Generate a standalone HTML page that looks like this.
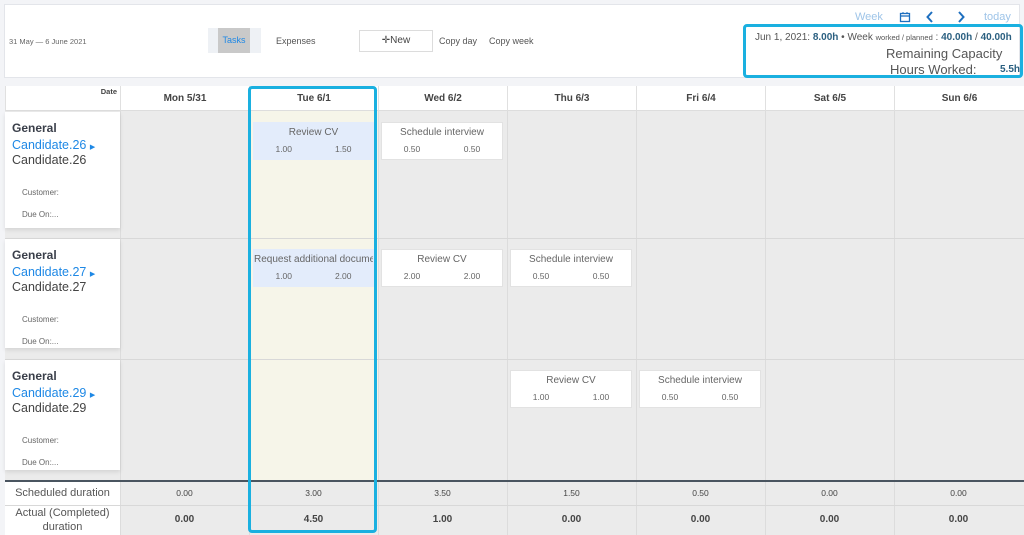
<!DOCTYPE html>
<html><head><meta charset="utf-8"><style>
*{box-sizing:border-box;margin:0;padding:0}
body{width:1024px;height:535px;overflow:hidden;background:#f3f4f7;font-family:"Liberation Sans",sans-serif;position:relative;color:#555}
.a{position:absolute}
.top{left:4px;top:4px;width:1016px;height:74px;background:#fff;border:1px solid #e3e5ea}
.grid{left:5px;top:86px;width:1019px;height:449px;background:#ebebeb}
.hd{top:86px;height:25px;background:#fff;border-left:1px solid #e0e0e0;border-bottom:1px solid #ddd;font-size:10px;font-weight:bold;color:#444;text-align:center;line-height:25px}
.col{border-left:1px solid #dcdcdc}
.hl{border-top:1px solid #d8d8d8}
.card{left:5px;width:115px;background:#fff;box-shadow:0 2px 4px rgba(0,0,0,.10);padding:9px 7px}
.card b{display:block;font-size:12px;color:#3a3f4a}
.card .c{font-size:12.5px;color:#1e88e5;margin-top:3px}
.card .d{font-size:12.5px;color:#444;margin-top:1px}
.card .s{font-size:8px;color:#666;margin-left:10px}
.t{background:#fff;border:1px solid #e2e2e2;font-size:10px;color:#666;text-align:center;padding-top:4px;white-space:nowrap;overflow:hidden}
.t .n{display:flex;justify-content:space-around;font-size:8.5px;margin-top:6px}
.blue{background:#e3ecfb;border-color:#e3ecfb}
.sum{font-size:8.5px;color:#444;text-align:center;width:129px}
</style></head><body>
<div class="a top"></div>
<div class="a" style="left:9px;top:37px;font-size:7.5px;color:#666">31 May — 6 June 2021</div>
<div class="a" style="left:208px;top:28px;width:53px;height:25px;background:#eef1f5"></div>
<div class="a" style="left:218px;top:28px;width:32px;height:25px;background:#c9c9c9;color:#1e88e5;font-size:9px;text-align:center;line-height:25px">Tasks</div>
<div class="a" style="left:276px;top:36px;font-size:9px;color:#555">Expenses</div>
<div class="a" style="left:359px;top:30px;width:74px;height:22px;border:1px solid #dcdcdc;background:#fff;font-size:10px;color:#444;text-align:center;line-height:20px">✛New</div>
<div class="a" style="left:439px;top:36px;font-size:9px;color:#555">Copy day</div>
<div class="a" style="left:489px;top:36px;font-size:9px;color:#555">Copy week</div>
<div class="a" style="left:855px;top:11px;font-size:11px;color:#9ec4e8">Week</div>
<svg class="a" style="left:899px;top:11px" width="12" height="12" viewBox="0 0 12 12"><rect x="1.5" y="2.5" width="9" height="8" fill="none" stroke="#1e6fbf" stroke-width="1.3"/><line x1="1.5" y1="5" x2="10.5" y2="5" stroke="#1e6fbf" stroke-width="1.3"/><line x1="4" y1="1" x2="4" y2="3" stroke="#1e6fbf"/><line x1="8" y1="1" x2="8" y2="3" stroke="#1e6fbf"/></svg>
<svg class="a" style="left:925px;top:11px" width="10" height="12"><path d="M7 1 L2.5 6 L7 11" fill="none" stroke="#1e6fbf" stroke-width="2"/></svg>
<svg class="a" style="left:956px;top:11px" width="10" height="12"><path d="M3 1 L7.5 6 L3 11" fill="none" stroke="#1e6fbf" stroke-width="2"/></svg>
<div class="a" style="left:984px;top:11px;font-size:11px;color:#9ec4e8">today</div>
<div class="a" style="left:755px;top:32px;font-size:10px;color:#555;white-space:nowrap">Jun 1, 2021: <b style="color:#2a5f80">8.00h</b> • Week <span style="font-size:7.5px">worked / planned</span> : <b style="color:#2a5f80">40.00h</b> / <b style="color:#2a5f80">40.00h</b></div>
<div class="a" style="left:886px;top:46px;font-size:13px;color:#555">Remaining Capacity</div>
<div class="a" style="left:890px;top:62px;font-size:13px;color:#555">Hours Worked:</div>
<div class="a" style="left:1000px;top:64px;font-size:10px;font-weight:bold;color:#2a5f80">5.5h</div>
<div class="a" style="left:743px;top:24px;width:280px;height:54px;border:3px solid #1ab0e0;border-radius:4px"></div>

<div class="a grid"></div>
<div class="a" style="left:249px;top:111px;width:129px;height:369px;background:#f6f5e9"></div>
<div class="a hd" style="left:5px;width:115px;text-align:right;padding-right:3px;line-height:12px;font-size:7.5px">Date</div>
<div class="a hd" style="left:120px;width:129px">Mon 5/31</div>
<div class="a hd" style="left:249px;width:129px">Tue 6/1</div>
<div class="a hd" style="left:378px;width:129px">Wed 6/2</div>
<div class="a hd" style="left:507px;width:129px">Thu 6/3</div>
<div class="a hd" style="left:636px;width:129px">Fri 6/4</div>
<div class="a hd" style="left:765px;width:129px">Sat 6/5</div>
<div class="a hd" style="left:894px;width:130px">Sun 6/6</div>
<div class="a col" style="left:120px;top:111px;height:424px"></div>
<div class="a col" style="left:249px;top:111px;height:424px"></div>
<div class="a col" style="left:378px;top:111px;height:424px"></div>
<div class="a col" style="left:507px;top:111px;height:424px"></div>
<div class="a col" style="left:636px;top:111px;height:424px"></div>
<div class="a col" style="left:765px;top:111px;height:424px"></div>
<div class="a col" style="left:894px;top:111px;height:424px"></div>
<div class="a hl" style="left:5px;top:238px;width:1019px"></div>
<div class="a hl" style="left:5px;top:359px;width:1019px"></div>

<div class="a card" style="top:112px;height:116px"><b>General</b><div class="c">Candidate.26 <span style="font-size:7px">▶</span></div><div class="d">Candidate.26</div><div class="s" style="margin-top:21px">Customer:</div><div class="s" style="margin-top:13px">Due On:...</div></div>
<div class="a card" style="top:239px;height:109px"><b>General</b><div class="c">Candidate.27 <span style="font-size:7px">▶</span></div><div class="d">Candidate.27</div><div class="s" style="margin-top:21px">Customer:</div><div class="s" style="margin-top:13px">Due On:...</div></div>
<div class="a card" style="top:360px;height:110px"><b>General</b><div class="c">Candidate.29 <span style="font-size:7px">▶</span></div><div class="d">Candidate.29</div><div class="s" style="margin-top:21px">Customer:</div><div class="s" style="margin-top:13px">Due On:...</div></div>

<div class="a t blue" style="left:253px;top:122px;width:121px;height:38px">Review CV<div class="n"><span>1.00</span><span>1.50</span></div></div>
<div class="a t" style="left:381px;top:122px;width:122px;height:38px">Schedule interview<div class="n"><span>0.50</span><span>0.50</span></div></div>
<div class="a t blue" style="left:253px;top:249px;width:121px;height:38px;text-align:left">Request additional documents<div class="n"><span>1.00</span><span>2.00</span></div></div>
<div class="a t" style="left:381px;top:249px;width:122px;height:38px">Review CV<div class="n"><span>2.00</span><span>2.00</span></div></div>
<div class="a t" style="left:510px;top:249px;width:122px;height:38px">Schedule interview<div class="n"><span>0.50</span><span>0.50</span></div></div>
<div class="a t" style="left:510px;top:370px;width:122px;height:38px">Review CV<div class="n"><span>1.00</span><span>1.00</span></div></div>
<div class="a t" style="left:639px;top:370px;width:122px;height:38px">Schedule interview<div class="n"><span>0.50</span><span>0.50</span></div></div>

<div class="a" style="left:5px;top:480px;width:1019px;height:2px;background:#4a5560"></div>
<div class="a" style="left:5px;top:482px;width:115px;height:53px;background:#fff"></div>
<div class="a hl" style="left:5px;top:505px;width:1019px"></div>
<div class="a" style="left:5px;top:487px;width:115px;text-align:center;font-size:11px;color:#555">Scheduled duration</div>
<div class="a" style="left:5px;top:506px;width:115px;text-align:center;font-size:11px;color:#555;line-height:14px">Actual (Completed)<br>duration</div>
<div class="a sum" style="left:120px;top:488px">0.00</div><div class="a sum" style="left:249px;top:488px">3.00</div><div class="a sum" style="left:378px;top:488px">3.50</div><div class="a sum" style="left:507px;top:488px">1.50</div><div class="a sum" style="left:636px;top:488px">0.50</div><div class="a sum" style="left:765px;top:488px">0.00</div><div class="a sum" style="left:894px;top:488px">0.00</div>
<div class="a sum" style="left:120px;top:514px;font-weight:bold;font-size:10px">0.00</div><div class="a sum" style="left:249px;top:514px;font-weight:bold;font-size:10px">4.50</div><div class="a sum" style="left:378px;top:514px;font-weight:bold;font-size:10px">1.00</div><div class="a sum" style="left:507px;top:514px;font-weight:bold;font-size:10px">0.00</div><div class="a sum" style="left:636px;top:514px;font-weight:bold;font-size:10px">0.00</div><div class="a sum" style="left:765px;top:514px;font-weight:bold;font-size:10px">0.00</div><div class="a sum" style="left:894px;top:514px;font-weight:bold;font-size:10px">0.00</div>

<div class="a" style="left:248px;top:86px;width:129px;height:447px;border:3px solid #1ab0e0;border-radius:4px"></div>
</body></html>
